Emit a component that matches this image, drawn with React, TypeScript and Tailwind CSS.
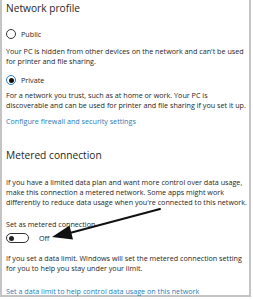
export default function App() {
  return (
    <div className="relative w-[251px] h-[297px] border-x-2 border-b-2 border-[#c4c4c4] bg-white pl-[4px] font-['Open_Sans',sans-serif] text-[#262626]">
      <h2 className="pt-[1px] text-[10.2px] leading-[14px] font-normal text-[#1f1f1f]">Network profile</h2>

      <div className="mt-[13px] flex h-[12px] items-center gap-[5px]">
        <span className="h-[10px] w-[10px] rounded-full border-[1.5px] border-[#333]" />
        <span className="text-[7.2px] leading-[10px]">Public</span>
      </div>
      <p className="mt-[6px] text-[7.2px] leading-[10px]">
        Your PC is hidden from other devices on the network and can't be used for printer and file sharing.
      </p>

      <div className="mt-[8px] flex h-[12px] items-center gap-[5px]">
        <span className="flex h-[10px] w-[10px] items-center justify-center rounded-full border-[1.5px] border-[#2a7ac0]">
          <span className="h-[5px] w-[5px] rounded-full bg-[#111]" />
        </span>
        <span className="text-[7.2px] leading-[10px]">Private</span>
      </div>
      <p className="mt-[4px] text-[7.2px] leading-[10px]">
        For a network you trust, such as at home or work. Your PC is discoverable and can be used for printer and file sharing if you set it up.
      </p>

      <p className="mt-[6px] text-[7.2px] leading-[10px] text-[#2b7bb9]">Configure firewall and security settings</p>

      <h2 className="mt-[22px] text-[10.2px] leading-[14px] font-normal text-[#1f1f1f]">Metered connection</h2>
      <p className="mt-[15px] text-[7.2px] leading-[10px]">
        If you have a limited data plan and want more control over data usage, make this connection a metered network. Some apps might work differently to reduce data usage when you're connected to this network.
      </p>

      <p className="mt-[12px] text-[7.2px] leading-[10px]">Set as metered connection</p>
      <div className="mt-[3px] flex h-[12px] items-center gap-[10px]">
        <span className="flex h-[10px] w-[23px] items-center rounded-full border-[1.5px] border-[#333] pl-[2px]">
          <span className="h-[5px] w-[5px] rounded-full bg-[#222]" />
        </span>
        <span className="text-[7.2px] leading-[10px]">Off</span>
      </div>

      <p className="mt-[9px] text-[7.2px] leading-[10px]">
        If you set a data limit. Windows will set the metered connection setting for you to help you stay under your limit.
      </p>
      <p className="mt-[13px] text-[7.2px] leading-[10px] text-[#2b7bb9]">Set a data limit to help control data usage on this network</p>

      <svg className="pointer-events-none absolute left-[-2px] top-0" width="253" height="300" viewBox="0 0 253 300">
        <line x1="160" y1="209" x2="66" y2="234" stroke="#111" strokeWidth="2" strokeLinecap="round" />
        <polygon points="52,237 69.5,225.5 73,239.5" fill="#111" />
      </svg>
    </div>
  );
}
